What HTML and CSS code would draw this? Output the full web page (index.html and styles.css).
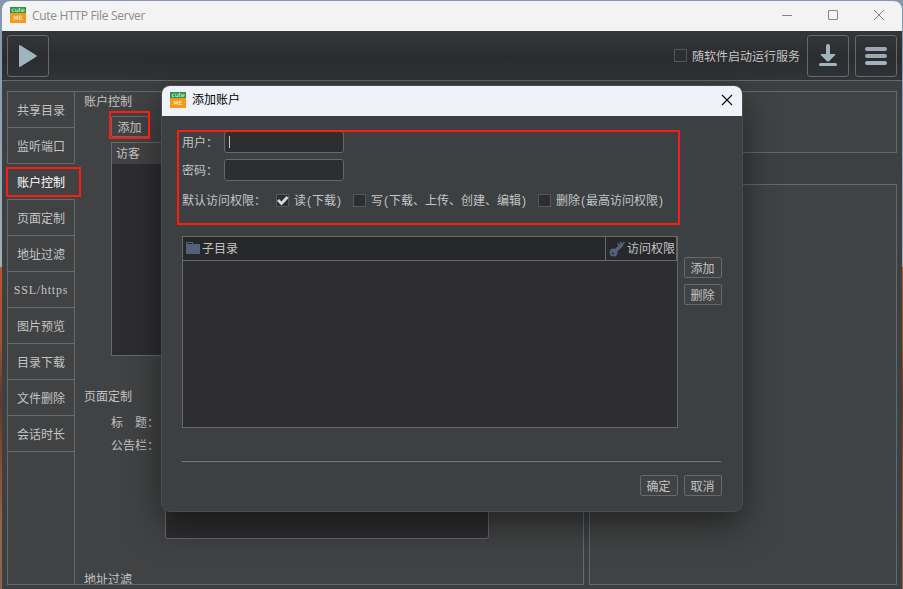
FILE: index.html
```html
<!DOCTYPE html>
<html lang="zh-CN">

<head>
    <meta charset="utf-8">
    <title>Cute HTTP File Server</title>
    <meta name="viewport" content="width=device-width, initial-scale=1.0">
    <link rel="stylesheet" href="styles.css">
</head>

<body>
    <div class="window">
        <header class="titlebar">
            <div class="logo"><span>cute</span><span>ME</span></div>
            <h1>Cute HTTP File Server</h1>
            <div class="window-controls">
                <svg width="12" height="12" viewBox="0 0 12 12"><path d="M1 6.500h10" /></svg>
                <svg width="12" height="12" viewBox="0 0 12 12"><rect x="1.500" y="1.500" width="9" height="9" rx="0.500" /></svg>
                <svg width="12" height="12" viewBox="0 0 12 12"><path d="M1 1l10 10M11 1L1 11" /></svg>
            </div>
        </header>

        <div class="toolbar">
            <div class="tool-button">
                <svg width="40" height="40" viewBox="0 0 40 40"><path d="M11 10q0-1.500 1.300-.8l16 10q1.200.8 0 1.600l-16 10q-1.300.7-1.300-.8z" fill="#a0b4c0" /></svg>
            </div>
            <label class="autostart"><span class="box"></span>随软件启动运行服务</label>
            <div class="tool-button">
                <svg width="40" height="40" viewBox="0 0 40 40" fill="#a0b4c0">
                    <path d="M18 10q0-2 2-2t2 2v8h4.500q1.500 0 .5 1.200l-6 6q-1 .8-2 0l-6-6q-1-1.200.5-1.200H18z" />
                    <rect x="11" y="27" width="18" height="3" rx="1.500" />
                </svg>
            </div>
            <div class="tool-button">
                <svg width="40" height="40" viewBox="0 0 40 40">
                    <rect x="9" y="11" width="22" height="4" rx="2" fill="#a2a4b8" />
                    <rect x="9" y="18" width="22" height="4" rx="2" fill="#98abb0" />
                    <rect x="9" y="25" width="22" height="4" rx="2" fill="#a0b4c0" />
                </svg>
            </div>
        </div>

        <main>
            <nav class="tabs">
                <div class="tab">共享目录</div>
                <div class="tab">监听端口</div>
                <div class="tab active">账户控制</div>
                <div class="tab">页面定制</div>
                <div class="tab">地址过滤</div>
                <div class="tab latin">SSL/https</div>
                <div class="tab">图片预览</div>
                <div class="tab">目录下载</div>
                <div class="tab">文件删除</div>
                <div class="tab">会话时长</div>
                <div class="tabs-rest"></div>
            </nav>

            <section class="settings">
                <h2>账户控制</h2>
                <div class="settings-group">
                    <div class="button">添加</div>
                    <div class="account-list">
                        <div class="account">访客</div>
                    </div>
                </div>
                <h2>页面定制</h2>
                <div class="settings-group page-group">
                    <div class="field-label">标　题<i>：</i></div>
                    <div class="notice-row">
                        <div class="field-label">公告栏<i>：</i></div>
                        <div class="textarea"></div>
                    </div>
                </div>
                <h2>地址过滤</h2>
            </section>

            <aside>
                <div class="panel info"></div>
                <div class="panel log"></div>
            </aside>
        </main>
    </div>

    <!-- Boîte de dialogue -->
    <div class="dialog">
        <div class="dialog-title">
            <div class="logo"><span>cute</span><span>ME</span></div>
            <h2>添加账户</h2>
            <svg width="12" height="12" viewBox="0 0 12 12"><path d="M1 1l10 10M11 1L1 11" /></svg>
        </div>

        <div class="form">
            <div class="form-row">
                <span class="form-label">用户<i>：</i></span>
                <div class="input"><span class="caret"></span></div>
            </div>
            <div class="form-row">
                <span class="form-label">密码<i>：</i></span>
                <div class="input"></div>
            </div>
            <div class="rights">
                <span class="rights-label">默认访问权限<i>：</i></span>
                <label><span class="box"><svg width="13" height="13" viewBox="0 0 13 13"><path d="M2 6l3.500 3.500L11.500 3" /></svg></span>读<i>(</i>下载<i>)</i></label>
                <label><span class="box"></span>写<i>(</i>下载、上传、创建、编辑<i>)</i></label>
                <label><span class="box"></span>删除<i>(</i>最高访问权限<i>)</i></label>
            </div>
        </div>

        <div class="directories">
            <div class="table">
                <div class="table-head">
                    <div class="col-name">
                        <svg width="14" height="12" viewBox="0 0 14 12"><path d="M0 0h7v2h7v10H0z" fill="#53617c" /><path d="M1 1.500h5" stroke="#27282a" /></svg>
                        子目录
                    </div>
                    <div class="col-rights">
                        <svg width="16" height="16" viewBox="0 0 16 16"><path d="M5 11.500L13.500 3" fill="none" stroke="#53617c" stroke-width="3.400" /><path d="M10.500 4.500L8.500 2.500M12.500 3L11 1M13 3.500L15.500 1" fill="none" stroke="#53617c" stroke-width="1.600" /><circle cx="4.500" cy="11.500" r="4" fill="#53617c" /><circle cx="3.800" cy="12.500" r="1.100" fill="#27282a" /></svg>
                        访问权限
                    </div>
                </div>
            </div>
            <div class="table-buttons">
                <div class="button">添加</div>
                <div class="button">删除</div>
            </div>
        </div>

        <div class="dialog-actions">
            <div class="button">确定</div>
            <div class="button">取消</div>
        </div>
    </div>

    <!-- Cadres rouges -->
    <div class="mark mark-tab"></div>
    <div class="mark mark-add"></div>
    <div class="mark mark-form"></div>
</body>

</html>
```

FILE: styles.css
```css
* {
    margin: 0;
    padding: 0;
    box-sizing: border-box;
}

body {
    width: 903px;
    height: 589px;
    padding: 1px 1px 0 2px;
    overflow: hidden;
    font-family: "Liberation Sans", "Noto Sans CJK SC", sans-serif;
    font-size: 12px;
    line-height: 18px;
    color: #c4c4c4;
    background: linear-gradient(#8496ad, #a4aeb5 266px, #b8552c 268px, #a35330 340px, #5e3a2e 400px, #8b4a30 460px, #93664c 530px, #8a644e);
}

h1,
h2 {
    height: 18px;
    font-size: 12px;
    font-weight: normal;
    line-height: 18px;
}

/* Fenêtre principale
============================================================*/
.window {
    height: 588px;
    display: flex;
    flex-direction: column;
    background-color: #3c4042;
    border-radius: 8px 8px 0 0;
    overflow: hidden;
}

.titlebar {
    height: 30px;
    flex: none;
    padding: 0 17px 2px 8px;
    display: flex;
    align-items: center;
    gap: 6px;
    background-color: #f3f3f3;
    color: #8b8b8b;
}

.titlebar h1 {
    font-family: "Open Sans", sans-serif;
    font-size: 12px;
    line-height: 19px;
    letter-spacing: -0.3px;
}

.logo {
    width: 16px;
    height: 16px;
    background: linear-gradient(#2a9547 6px, #f39a1c 6px);
    color: #fff6e0;
    font: 6px/6px "DejaVu Sans", sans-serif;
    text-align: center;
}

.logo span {
    display: block;
}

.logo span:last-child {
    line-height: 10px;
}

.window-controls {
    margin-left: auto;
    display: flex;
    gap: 34px;
}

.window-controls svg {
    fill: none;
    stroke: #858585;
}

/* Barre d'outils */
.toolbar {
    height: 50px;
    flex: none;
    padding: 4px 5px 3px;
    display: flex;
    gap: 6px;
    border-bottom: 1px solid #66696b;
    background: linear-gradient(#34373a, #2b2c2e 55%, #303438);
}

.tool-button {
    width: 42px;
    height: 42px;
    border: 1px solid #66686a;
    border-radius: 3px;
}

.tool-button svg {
    display: block;
}

.autostart {
    height: 42px;
    margin-left: auto;
    margin-right: 1px;
    padding-top: 1px;
    display: flex;
    align-items: center;
    gap: 5px;
}

.box {
    width: 13px;
    height: 13px;
    margin-bottom: 2px;
    border: 1px solid #55585a;
    background-color: #2d2e30;
}

/* Contenu
============================================================*/
main {
    flex: 1;
    min-height: 0;
    padding: 10px 5px 4px;
    display: flex;
}

.tabs {
    width: 68px;
    display: flex;
    flex-direction: column;
    background-color: #414243;
}

.tab {
    height: 36px;
    border: 1px solid #66686a;
    border-bottom: none;
    display: flex;
    align-items: center;
    justify-content: center;
    padding-top: 3px;
}

.tab.active {
    border-left-color: transparent;
    border-right-color: transparent;
    color: #fff;
}

.tab.latin {
    padding-top: 1px;
    font-family: "Liberation Serif", serif;
    letter-spacing: 0.8px;
}

.tabs-rest {
    flex: 1;
    border: 1px solid #66686a;
}

.settings {
    width: 509px;
    padding-left: 9px;
    border: 1px solid #66686a;
    border-left: none;
    background-color: #414243;
    overflow: hidden;
}

.settings h2 {
    line-height: 20px;
}

.settings-group {
    padding: 6px 0 31px 27px;
}

.page-group {
    padding-top: 8px;
}

.button {
    width: 38px;
    height: 21px;
    padding-right: 1px;
    border: 1px solid #68696b;
    border-radius: 2px;
    background-color: #414243;
    text-align: center;
    line-height: 22px;
}

.account-list {
    width: 378px;
    height: 214px;
    margin-top: 5px;
    border: 1px solid #66686a;
    background-color: #2d2d2f;
}

.account {
    height: 21px;
    padding-left: 4px;
    line-height: 23px;
    background-color: #424344;
}

.notice-row {
    margin-top: 5px;
    display: flex;
}

.field-label {
    width: 54px;
    height: 18px;
    line-height: 20px;
    white-space: nowrap;
}

.textarea {
    width: 324px;
    height: 103px;
    border: 1px solid #66686a;
    border-radius: 3px;
    background-color: #2d2d2f;
}

aside {
    flex: 1;
    margin-left: 5px;
    display: flex;
    flex-direction: column;
    gap: 31px;
}

.panel {
    border: 1px solid #66686a;
    background-color: #414243;
}

.info {
    height: 62px;
}

.log {
    flex: 1;
}

/* Boîte de dialogue
============================================================*/
.dialog {
    position: absolute;
    left: 162px;
    top: 86px;
    width: 580px;
    height: 425px;
    border-radius: 8px;
    background-color: #3c4042;
    box-shadow: 0 0 0 1px #4a4c4d, 0 12px 36px rgba(0, 0, 0, 0.5);
}

.dialog-title {
    height: 30px;
    padding: 0 9px 2px 8px;
    display: flex;
    align-items: center;
    gap: 6px;
    border-radius: 8px 8px 0 0;
    background-color: #eff3f9;
    color: #000;
}

.dialog-title svg {
    margin-left: auto;
    fill: none;
    stroke: #111;
    stroke-width: 1.2;
}

.form {
    height: 120px;
    padding: 15px 0 0 20px;
}

.form-row {
    height: 22px;
    margin-bottom: 6px;
    display: flex;
    align-items: center;
}

.form-label {
    width: 42px;
    height: 18px;
    line-height: 20px;
}

.form-label i,
.rights-label i,
.field-label i {
    font-style: normal;
}

.input {
    width: 120px;
    height: 22px;
    padding: 4px;
    border: 1px solid #66686a;
    border-radius: 3px;
    background-color: #2d2e30;
}

.caret {
    display: block;
    width: 1px;
    height: 12px;
    background-color: #c4c4c4;
}

.rights {
    height: 26px;
    padding-top: 2px;
    display: flex;
    align-items: center;
    white-space: nowrap;
}

.rights-label {
    width: 94px;
}

.rights label {
    display: flex;
    align-items: center;
    margin-right: 11px;
}

.rights .box {
    margin-right: 5px;
}

.rights .box svg {
    display: block;
    margin: -1px;
    fill: none;
    stroke: #d5d8da;
    stroke-width: 2.8;
}

/* Parenthèses d'une demi-chasse */
.rights label i {
    width: 6px;
    font-style: normal;
    text-align: center;
}

.directories {
    padding-left: 20px;
    display: flex;
    gap: 6px;
}

.table {
    width: 496px;
    height: 192px;
    border: 1px solid #66686a;
    background-color: #2d2d2f;
}

.table-head {
    height: 24px;
    display: flex;
    border-bottom: 1px solid #66686a;
    background-color: #27282a;
}

.table-head div {
    display: flex;
    align-items: center;
    gap: 2px;
    padding-left: 3px;
    white-space: nowrap;
}

.col-name {
    flex: 1;
}

.col-name svg {
    margin-bottom: 2px;
}

.table-head .col-rights {
    width: 72px;
    border-left: 1px solid #66686a;
    border-right: 1px solid #66686a;
}

.table-buttons {
    padding-top: 21px;
    display: flex;
    flex-direction: column;
    gap: 6px;
}

.dialog-actions {
    margin: 33px 21px 0 20px;
    padding-top: 13px;
    display: flex;
    justify-content: flex-end;
    gap: 6px;
    border-top: 1px solid #76797b;
    box-shadow: 0 -1px #35383a;
}

.dialog-actions .button:last-child {
    margin-right: -1px;
}

/* Cadres rouges
============================================================*/
.mark {
    position: absolute;
    border: 2px solid #fb1d10;
}

.mark-tab {
    left: 6px;
    top: 167px;
    width: 75px;
    height: 30px;
}

.mark-add {
    left: 109px;
    top: 111px;
    width: 41px;
    height: 28px;
}

.mark-form {
    left: 177px;
    top: 130px;
    width: 503px;
    height: 95px;
}
```
